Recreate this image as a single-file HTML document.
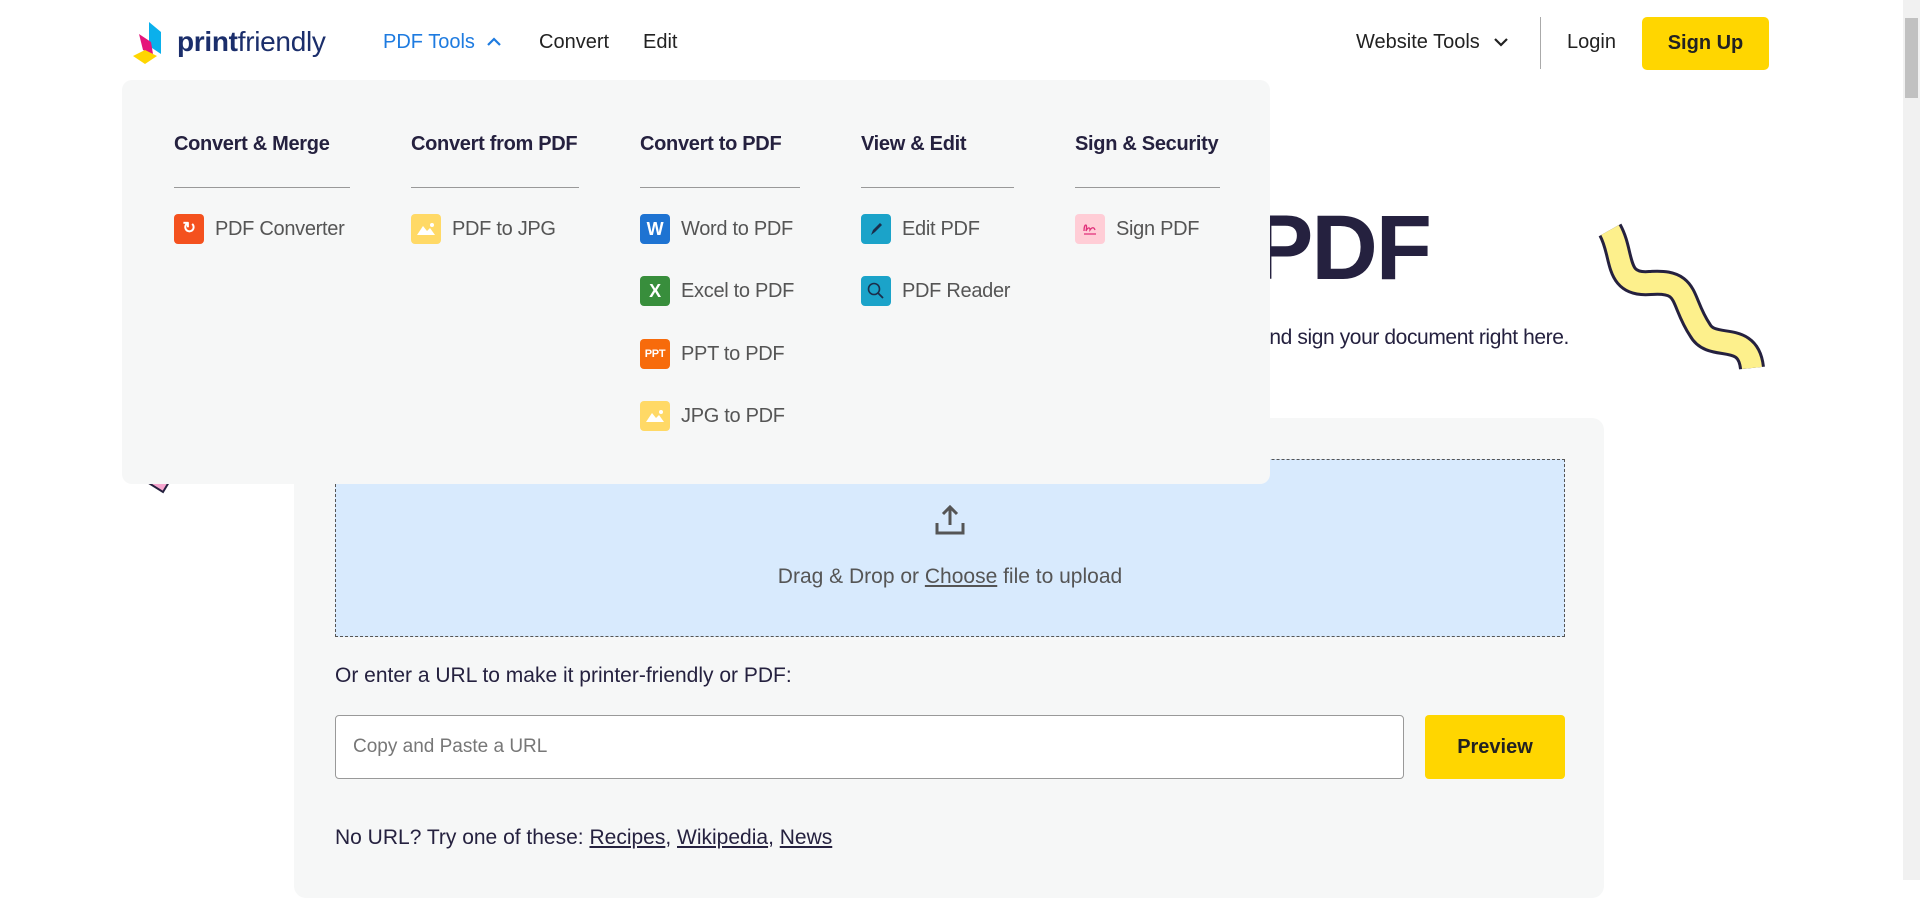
<!DOCTYPE html>
<html><head><meta charset="utf-8"><style>
*{margin:0;padding:0;box-sizing:border-box}
body{width:1920px;height:880px;overflow:hidden;background:#fff;font-family:"Liberation Sans",sans-serif;color:#25213f;position:relative}
.a{position:absolute;white-space:nowrap}
.nav{font-size:20px;color:#222;top:31px}
.panel{position:absolute;left:122px;top:80px;width:1148px;height:404px;background:#f6f7f7;border-radius:10px;z-index:5}
.h{position:absolute;top:133px;font-size:20px;font-weight:bold;color:#25213f;letter-spacing:-0.3px}
.ln{position:absolute;top:187px;height:1px;background:#999}
.it{position:absolute;font-size:20px;color:#555;letter-spacing:-0.3px;line-height:30px;padding-left:41px}
.ic{position:absolute;left:0;top:0;width:30px;height:30px;border-radius:4px;color:#fff;font-weight:bold;text-align:center;line-height:30px;font-size:18px}
</style></head><body>
<!-- header -->
<svg class="a" style="left:131px;top:22px" width="44" height="42" viewBox="0 0 44 42">
<polygon points="18,0 30,10 30,32 18,24" fill="#0ab0ec"/>
<polygon points="8,12 20,20 22,32 12,28" fill="#e5157a"/>
<polygon points="2,34 14,28 26,34 14,42" fill="#ffd600"/>
</svg>
<div class="a" style="left:177px;top:26px;font-size:28px;color:#1b2e6b;letter-spacing:-0.3px"><b>print</b><span style="font-weight:normal">friendly</span></div>
<div class="a nav" style="left:383px;color:#1e7be0">PDF Tools <svg width="16" height="12" viewBox="0 0 16 12" style="margin-left:6px"><path d="M2 9 L8 3 L14 9" fill="none" stroke="#1e7be0" stroke-width="2.2"/></svg></div>
<div class="a nav" style="left:539px">Convert</div>
<div class="a nav" style="left:643px">Edit</div>
<div class="a nav" style="left:1356px">Website Tools <svg width="16" height="12" viewBox="0 0 16 12" style="margin-left:8px"><path d="M2 3 L8 9 L14 3" fill="none" stroke="#222" stroke-width="2.2"/></svg></div>
<div class="a" style="left:1540px;top:17px;width:1px;height:52px;background:#aaa"></div>
<div class="a nav" style="left:1567px">Login</div>
<div class="a" style="left:1642px;top:17px;width:127px;height:53px;background:#ffd600;border-radius:5px;font-size:20px;font-weight:bold;text-align:center;line-height:53px;color:#222">Sign Up</div>
<!-- scrollbar -->
<div class="a" style="left:1903px;top:0;width:17px;height:880px;background:#f1f1f1"></div>
<div class="a" style="left:1905px;top:18px;width:13px;height:80px;background:#c1c1c1"></div>
<!-- hero -->
<div class="a" style="right:490px;top:196px;font-size:92px;font-weight:bold;color:#25213f;letter-spacing:-2px">Edit &amp; Sign PDF</div>
<div class="a" style="right:351px;top:326px;font-size:21px;color:#25213f;letter-spacing:-0.4px">Edit, convert, annotate, and sign your document right here.</div>
<svg class="a" style="left:1590px;top:215px" width="185" height="170" viewBox="1590 215 185 170">
<path d="M1610 230 C1624 255,1614 286,1650 283 C1690 280,1680 300,1700 330 C1712 352,1748 330,1752 368" fill="none" stroke="#25213f" stroke-width="26" stroke-linejoin="round"/>
<path d="M1610 230 C1624 255,1614 286,1650 283 C1690 280,1680 300,1700 330 C1712 352,1748 330,1752 368" fill="none" stroke="#fdf08c" stroke-width="20" stroke-linejoin="round"/>
</svg>
<svg class="a" style="left:145px;top:478px" width="30" height="16" viewBox="0 0 30 16"><polygon points="2,4 24,4 18,14" fill="#f7a6cf" stroke="#25213f" stroke-width="2"/></svg>
<!-- card -->
<div class="a" style="left:294px;top:418px;width:1310px;height:480px;background:#f6f7f7;border-radius:12px"></div>
<div class="a" style="left:335px;top:459px;width:1230px;height:178px;background:#d8eafd;border:1px dashed #555"></div>
<svg class="a" style="left:934px;top:503px" width="32" height="34" viewBox="0 0 32 34"><path d="M16 22 V4 M9 11 L16 4 L23 11 M3 20 V30 H29 V20" fill="none" stroke="#555" stroke-width="3"/></svg>
<div class="a" style="left:335px;width:1230px;top:565px;text-align:center;font-size:21px;color:#555">Drag &amp; Drop or <u>Choose</u> file to upload</div>
<div class="a" style="left:335px;top:664px;font-size:21px;color:#25213f">Or enter a URL to make it printer-friendly or PDF:</div>
<div class="a" style="left:335px;top:715px;width:1069px;height:64px;background:#fff;border:1px solid #999;border-radius:4px;font-size:19px;color:#777;padding-left:17px;line-height:62px">Copy and Paste a URL</div>
<div class="a" style="left:1425px;top:715px;width:140px;height:64px;background:#ffd600;border-radius:4px;font-size:20px;font-weight:bold;text-align:center;line-height:64px;color:#222">Preview</div>
<div class="a" style="left:335px;top:826px;font-size:21px;color:#25213f">No URL? Try one of these: <u>Recipes</u>, <u>Wikipedia</u>, <u>News</u></div>
<!-- dropdown -->
<div class="panel">
<div class="h" style="left:52px;top:53px">Convert &amp; Merge</div>
<div class="h" style="left:289px;top:53px">Convert from PDF</div>
<div class="h" style="left:518px;top:53px">Convert to PDF</div>
<div class="h" style="left:739px;top:53px">View &amp; Edit</div>
<div class="h" style="left:953px;top:53px">Sign &amp; Security</div>
<div class="ln" style="left:52px;width:176px;top:107px"></div>
<div class="ln" style="left:289px;width:168px;top:107px"></div>
<div class="ln" style="left:518px;width:160px;top:107px"></div>
<div class="ln" style="left:739px;width:153px;top:107px"></div>
<div class="ln" style="left:953px;width:145px;top:107px"></div>

<div class="it" style="left:52px;top:134px"><span class="ic" style="background:#f4511e;font-size:16px">↻</span>PDF Converter</div>
<div class="it" style="left:289px;top:134px"><span class="ic" style="background:#ffd966"><svg width="22" height="16" viewBox="0 0 22 16" style="margin-top:7px"><polygon points="2,14 8,5 12,10 15,7 20,14" fill="#fff"/><circle cx="17" cy="4" r="2" fill="#fff"/></svg></span>PDF to JPG</div>
<div class="it" style="left:518px;top:134px"><span class="ic" style="background:#1e73d2">W</span>Word to PDF</div>
<div class="it" style="left:518px;top:196px"><span class="ic" style="background:#388e3c">X</span>Excel to PDF</div>
<div class="it" style="left:518px;top:259px"><span class="ic" style="background:#f76b0b;font-size:11px">PPT</span>PPT to PDF</div>
<div class="it" style="left:518px;top:321px"><span class="ic" style="background:#ffd966"><svg width="22" height="16" viewBox="0 0 22 16" style="margin-top:7px"><polygon points="2,14 8,5 12,10 15,7 20,14" fill="#fff"/><circle cx="17" cy="4" r="2" fill="#fff"/></svg></span>JPG to PDF</div>
<div class="it" style="left:739px;top:134px"><span class="ic" style="background:#1ba3c9"><svg width="18" height="18" viewBox="0 0 18 18" style="margin-top:6px"><path d="M4 15 L6 10 L13 3 L15 5 L8 12 Z" fill="#1b2e4b"/></svg></span>Edit PDF</div>
<div class="it" style="left:739px;top:196px"><span class="ic" style="background:#1ba3c9"><svg width="20" height="20" viewBox="0 0 20 20" style="margin-top:5px"><circle cx="8" cy="8" r="5.5" fill="none" stroke="#1b2e4b" stroke-width="1.6"/><path d="M12 12 L17 17" stroke="#1b2e4b" stroke-width="1.8"/></svg></span>PDF Reader</div>
<div class="it" style="left:953px;top:134px"><span class="ic" style="background:#ffcdd6"><svg width="20" height="16" viewBox="0 0 20 16" style="margin-top:7px"><path d="M4 10 C4 2,8 2,6 10 C8 6,10 6,10 9 C12 6,14 6,15 9 M4 13 H16" fill="none" stroke="#e0307a" stroke-width="1.3"/></svg></span>Sign PDF</div>
</div>
</body></html>
